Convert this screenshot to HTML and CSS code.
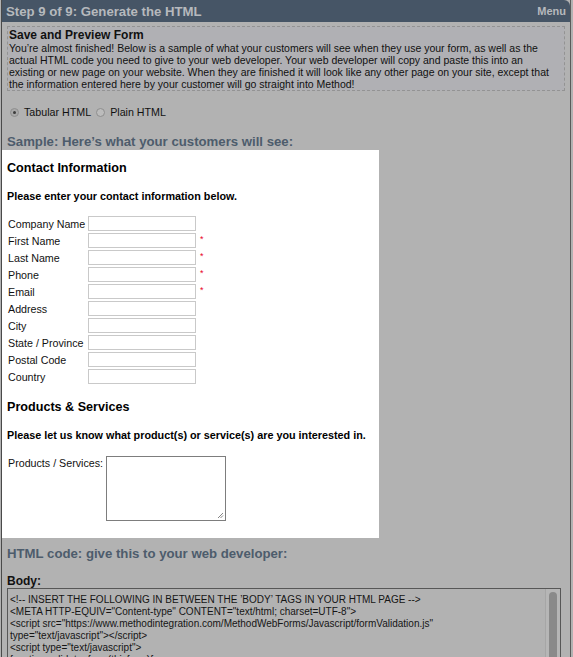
FILE: index.html
```html
<!DOCTYPE html>
<html>
<head>
<meta charset="utf-8">
<link rel="stylesheet" href="styles.css">
</head>
<body>
<div class="wrap">
  <div class="topbar">
    <span class="title">Step 9 of 9: Generate the HTML</span>
    <span class="menu">Menu</span>
  </div>
  <div class="content">
    <div class="intro">
      <div class="intro-title">Save and Preview Form</div>
      <p class="intro-text">You’re almost finished! Below is a sample of what your customers will see when they use your form, as well as the<br>actual HTML code you need to give to your web developer. Your web developer will copy and paste this into an<br>existing or new page on your website. When they are finished it will look like any other page on your site, except that<br>the information entered here by your customer will go straight into Method!</p>
    </div>
    <div class="radios">
      <span class="radio checked"></span><span class="rlabel">Tabular HTML</span>
      <span class="radio"></span><span class="rlabel">Plain HTML</span>
    </div>
    <h2 class="section">Sample: Here’s what your customers will see:</h2>
  </div>
  <div class="sample">
    <h3 class="s-head">Contact Information</h3>
    <p class="s-note">Please enter your contact information below.</p>
    <table class="fields">
      <tr><td class="lbl">Company Name</td><td><span class="inp"></span></td><td class="req"></td></tr>
      <tr><td class="lbl">First Name</td><td><span class="inp"></span></td><td class="req"><span class="star">*</span></td></tr>
      <tr><td class="lbl">Last Name</td><td><span class="inp"></span></td><td class="req"><span class="star">*</span></td></tr>
      <tr><td class="lbl">Phone</td><td><span class="inp"></span></td><td class="req"><span class="star">*</span></td></tr>
      <tr><td class="lbl">Email</td><td><span class="inp"></span></td><td class="req"><span class="star">*</span></td></tr>
      <tr><td class="lbl">Address</td><td><span class="inp"></span></td><td class="req"></td></tr>
      <tr><td class="lbl">City</td><td><span class="inp"></span></td><td class="req"></td></tr>
      <tr><td class="lbl">State / Province</td><td><span class="inp"></span></td><td class="req"></td></tr>
      <tr><td class="lbl">Postal Code</td><td><span class="inp"></span></td><td class="req"></td></tr>
      <tr><td class="lbl">Country</td><td><span class="inp"></span></td><td class="req"></td></tr>
    </table>
    <h3 class="s-head s-head2">Products &amp; Services</h3>
    <p class="s-note s-note2">Please let us know what product(s) or service(s) are you interested in.</p>
    <div class="prod-row">
      <span class="prod-lbl">Products / Services:</span>
      <span class="tarea"><svg class="grip" width="7" height="7" viewBox="0 0 7 7"><path d="M6 1 L1 6 M6 3.5 L3.5 6" stroke="#777" stroke-width="0.9"/></svg></span>
    </div>
  </div>
  <div class="content">
    <h2 class="section code-head">HTML code: give this to your web developer:</h2>
    <div class="body-lbl">Body:</div>
    <div class="code">
      <div class="code-text">&lt;!-- INSERT THE FOLLOWING IN BETWEEN THE ’BODY’ TAGS IN YOUR HTML PAGE --&gt;
&lt;META HTTP-EQUIV="Content-type" CONTENT="text/html; charset=UTF-8"&gt;
&lt;script src="https://www.methodintegration.com/MethodWebForms/Javascript/formValidation.js"
type="text/javascript"&gt;&lt;/script&gt;
&lt;script type="text/javascript"&gt;
function validate_form(thisform){</div>
      <div class="scroll"><div class="thumb"></div></div>
    </div>
  </div>
</div>
</body>
</html>
```

FILE: styles.css
```css
html, body {
  margin: 0;
  padding: 0;
  background: #b2b2b2;
  font-family: "Liberation Sans", Arial, sans-serif;
  color: #111;
}
.wrap {
  margin-left: 1px;
  width: 568px;
  height: 657px;
  overflow: hidden;
  border-left: 1px solid #4a4a4a;
  border-right: 1px solid #5a5a5a;
  background: #b2b2b2;
}
.topbar {
  height: 22px;
  background: #465566;
  border-top-right-radius: 6px;
  display: flex;
  align-items: center;
  justify-content: space-between;
  padding: 0 4px 0 4px;
}
.title {
  font-weight: bold;
  font-size: 13.2px;
  color: #b6b9bd;
}
.menu {
  font-weight: bold;
  font-size: 11px;
  color: #b6b9bd;
}
.content {
  padding: 0 5px;
}
.intro {
  margin-top: 4px;
  border: 1px dashed #939393;
  background: #b0b0b4;
  padding: 2px 1px 0 1px;
}
.intro-title {
  font-weight: bold;
  font-size: 12px;
  line-height: 13px;
}
.intro-text {
  margin: 0;
  font-size: 10.5px;
  line-height: 12px;
  white-space: nowrap;
}
.radios {
  margin-top: 14px;
  height: 14px;
  display: flex;
  align-items: center;
  font-size: 10.7px;
}
.radio {
  width: 9px;
  height: 9px;
  border-radius: 50%;
  border: 1px solid #8e8e8e;
  background: #bcbcbc;
  margin: 0 5px 0 3px;
  position: relative;
  box-sizing: border-box;
}
.radio + .rlabel + .radio {
  margin-left: 5px;
}
.radio.checked {
  background: #a8a8a8;
}
.radio.checked::after {
  content: "";
  position: absolute;
  left: 2px;
  top: 2px;
  width: 3px;
  height: 3px;
  border-radius: 50%;
  background: #3c3c3c;
}
.section {
  margin: 15px 0 0;
  font-size: 13.2px;
  line-height: 16px;
  font-weight: bold;
  color: #4d5c6c;
}
.sample {
  width: 372px;
  background: #fff;
  padding: 10px 0 17px 5px;
}
.s-head {
  margin: 0;
  font-size: 12.6px;
  line-height: 16px;
  font-weight: bold;
  color: #000;
}
.s-head2 {
  margin-top: 14px;
}
.s-note {
  margin: 13px 0 12px;
  font-size: 10.8px;
  line-height: 14px;
  font-weight: bold;
  color: #000;
}
.s-note2 {
  margin: 13px 0 14px;
}
.fields {
  border-collapse: collapse;
  font-size: 10.7px;
}
.fields td {
  padding: 0;
  height: 17px;
  vertical-align: middle;
}
.fields .lbl {
  width: 78px;
  padding-left: 1px;
  padding-right: 2px;
  color: #111;
  white-space: nowrap;
}
.inp {
  display: block;
  width: 108px;
  height: 15px;
  box-sizing: border-box;
  border: 1px solid #c9c9c9;
  background: #fff;
}
.fields .req {
  width: 12px;
  position: relative;
}
.star {
  position: absolute;
  left: 4px;
  top: 3px;
  color: #e8001c;
  font-size: 9px;
  line-height: 9px;
}
.prod-row {
  display: flex;
  align-items: flex-start;
}
.prod-lbl {
  font-size: 10.7px;
  padding-left: 1px;
  margin-top: 1px;
  margin-right: 3px;
  color: #111;
}
.tarea {
  display: block;
  position: relative;
  width: 120px;
  height: 65px;
  box-sizing: border-box;
  border: 1px solid #7d7d7d;
  background: #fff;
}
.grip {
  position: absolute;
  right: 1px;
  bottom: 1px;
}
.code-head {
  margin-top: 8px;
  margin-bottom: 0;
}
.body-lbl {
  margin-top: 12px;
  font-size: 12px;
  line-height: 14px;
  font-weight: bold;
  color: #111;
}
.code {
  position: relative;
  width: 554px;
  height: 90px;
  box-sizing: border-box;
  border: 1px solid #575757;
  background: #b2b2b2;
}
.code-text {
  white-space: pre;
  font-size: 10px;
  line-height: 12px;
  padding: 5px 3px 0 2px;
  color: #151515;
}
.scroll {
  position: absolute;
  top: 0;
  right: 0;
  width: 14px;
  height: 100%;
  background: #b6b6b6;
  border-left: 1px solid #a6a6a6;
}
.thumb {
  position: absolute;
  left: 3px;
  top: 3px;
  width: 8px;
  bottom: 0;
  border-radius: 4px;
  background: #8a8a8a;
}
```
